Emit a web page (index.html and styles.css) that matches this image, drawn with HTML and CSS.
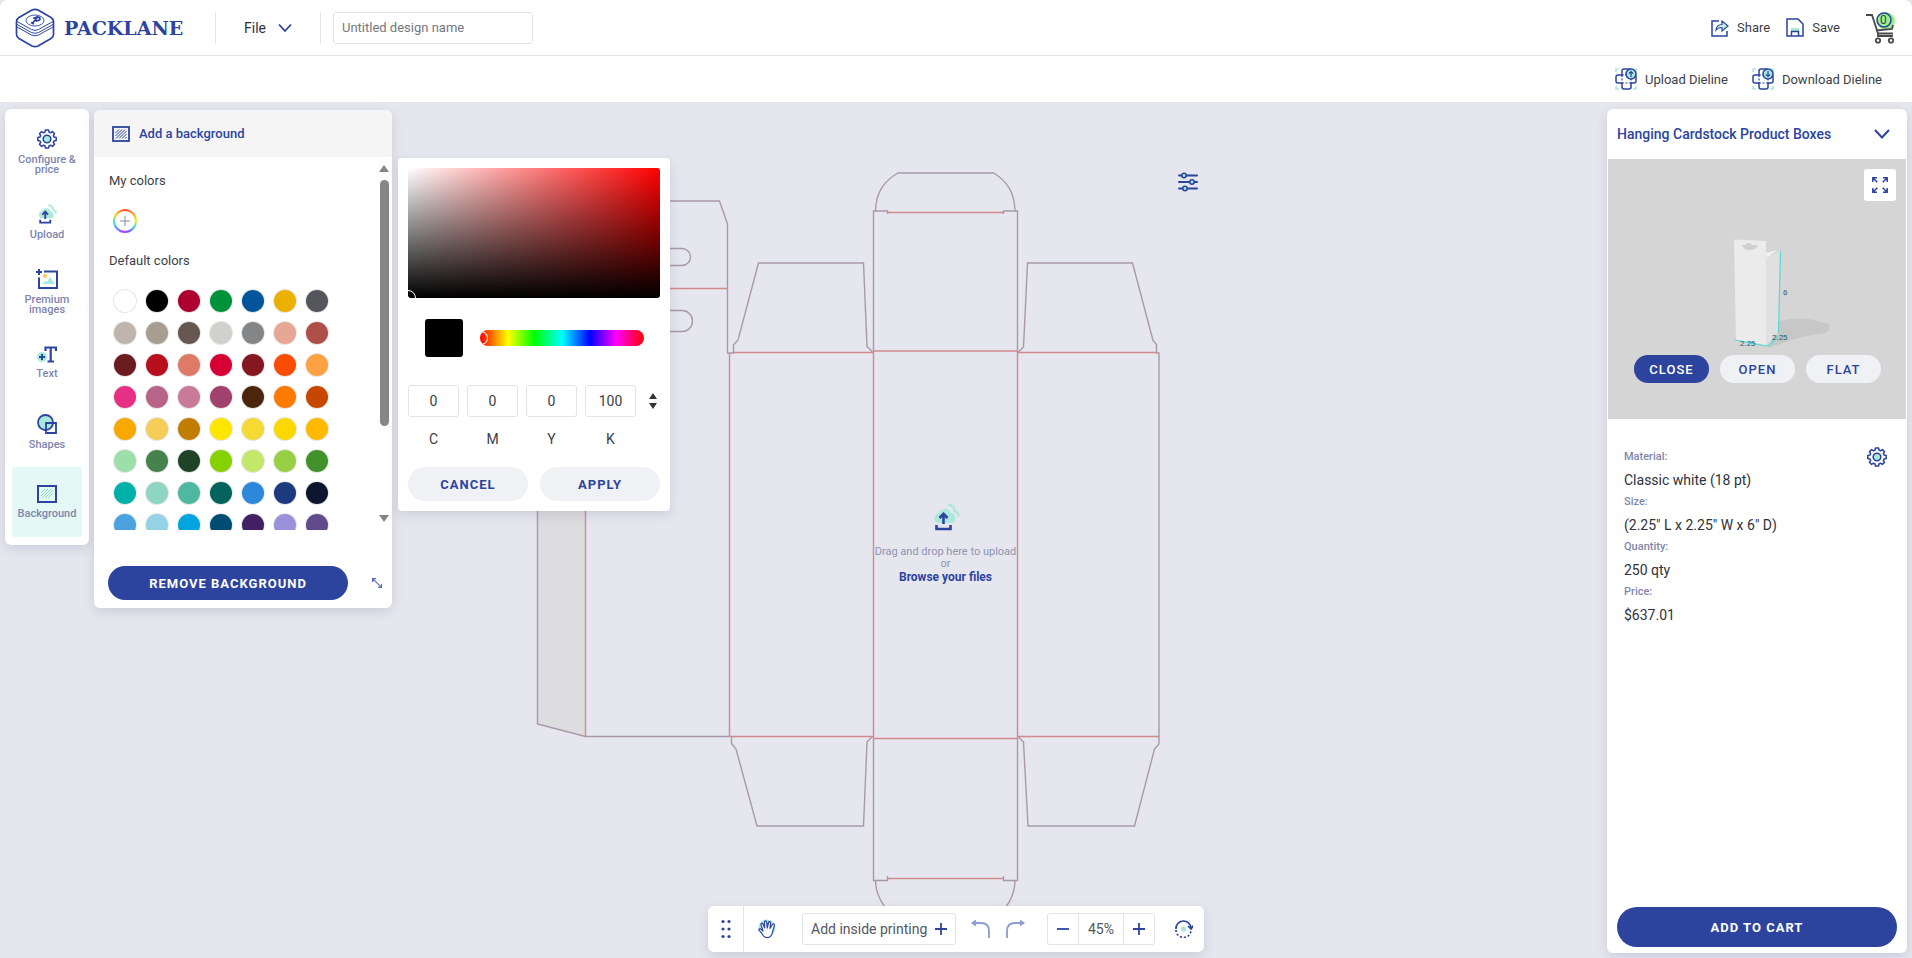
FILE: index.html
```html
<!DOCTYPE html>
<html lang="en">
<head>
<meta charset="utf-8">
<title>Packlane design editor</title>
<link rel="stylesheet" href="styles.css">
</head>
<body>
<svg class="defs" aria-hidden="true">
  <symbol id="gear" viewBox="0 0 20 20">
    <path d="M8.3 1h3.4l.5 2.4 1.6.7 2.1-1.3 2.3 2.3-1.3 2.1.7 1.6 2.4.5v3.4l-2.4.5-.7 1.6 1.3 2.1-2.3 2.3-2.1-1.3-1.6.7-.5 2.4H8.3l-.5-2.4-1.6-.7-2.1 1.3-2.3-2.3 1.3-2.1-.7-1.6L0 12.700V9.300l2.400-.5.7-1.600L1.800 5.100 4.100 2.800l2.100 1.300 1.600-.7z" transform="translate(.8 .1) scale(.92 .9)" fill="none" stroke="#2c449e" stroke-width="1.7" stroke-linejoin="round"/>
    <circle cx="10" cy="10" r="3.800" fill="#a9e8da" stroke="#2c449e" stroke-width="1.600"/>
  </symbol>
  <symbol id="cloud" viewBox="0 0 28 28">
    <path d="M6 20a5 5 0 0 1 .8-9.700A6.500 6.500 0 0 1 19 10a5.200 5.200 0 0 1 1 10z" fill="#a9e8da"/>
    <path d="M16 1.500c4.500.5 6.500 3 6.700 6.500 2.500.7 3.800 2.800 4 5.500" fill="none" stroke="#a9e8da" stroke-width="2.400"/>
    <path d="M11.500 21V12M7.500 15l4-4.200 4 4.200" fill="none" stroke="#2c449e" stroke-width="2.600"/>
    <path d="M4.500 22v4h14v-4" fill="none" stroke="#2c449e" stroke-width="2.600"/>
  </symbol>
  <symbol id="dieline-icon" viewBox="0 0 22 22">
    <path d="M1 4V1h3M18 1h3v3M21 18v3h-3M4 21H1v-3" fill="none" stroke="#8fe0cc" stroke-width="1.200"/>
    <path d="M7 7V3q0-2 2-2h5q2 0 2 2v4h3q2 0 2 2v4q0 2-2 2h-3v4q0 2-2 2H9q-2 0-2-2v-4H3q-2 0-2-2V9q0-2 2-2z" fill="none" stroke="#2c449e" stroke-width="1.500"/>
    <path d="M7 7v8M16 7v8M7 15h9M7 7h4" stroke="#2c449e" stroke-width="1.200" stroke-dasharray="2 1.500"/>
    <circle cx="16" cy="6" r="5" fill="#a9e8da" stroke="#2c449e" stroke-width="1.600"/>
  </symbol>
</svg>

<header class="topbar">
  <a class="logo" href="#" aria-label="Packlane">
    <svg width="40" height="40" viewBox="0 0 40 40" fill="none" stroke="#2c449e" stroke-linejoin="round">
      <path d="M17 2q3-1.400 6 0l13 7.500q2.500 1.500 2.500 4v13q0 2.500-2.500 4L23 38q-3 1.400-6 0L4 30.500q-2.500-1.500-2.500-4v-13q0-2.500 2.500-4z" stroke-width="1.700"/>
      <path d="M2 13.500l14.500 8q3.500 1.700 7 0l14.500-8M2 16.500l14.500 8q3.500 1.700 7 0l14.500-8M2 19l14.500 8q3.500 1.700 7 0l14.500-8" stroke-width="1"/>
      <ellipse cx="20" cy="12.500" rx="9" ry="5.500" stroke-width=".9"/>
      <path d="M16 14.500l3 1.500M17.500 15l4.500-5M18 10.500l4-1.500c4 0 4.500 3.500-1.500 4" stroke-width="1.800"/>
    </svg>
    <span class="logo-text">PACKLANE</span>
  </a>
  <span class="rule"></span>
  <button class="file" type="button">File
    <svg width="14" height="10" viewBox="0 0 14 10" fill="none" stroke="#2c449e" stroke-width="1.800"><path d="M1 1.500l6 6.500 6-6.500"/></svg>
  </button>
  <span class="rule"></span>
  <input class="design-name" type="text" placeholder="Untitled design name" aria-label="Design name">
  <nav class="top-actions">
    <button type="button">
      <svg width="18" height="18" viewBox="0 0 18 18" fill="none" stroke="#2c449e" stroke-width="1.500"><path d="M8 2H1v15h15v-5"/><path d="M5 11c.5-4 3-5.500 6-5.500V2l6 5-6 5V8.500c-2.500 0-4.500.5-6 2.500z" fill="#c9f1e8" stroke-width="1.200"/></svg>
      Share</button>
    <button type="button">
      <svg width="18" height="19" viewBox="0 0 18 19" fill="none" stroke="#2c449e" stroke-width="1.500"><path d="M5 10h8v4H5z" fill="#a9e8da" stroke="none"/><path d="M1 1h11l5 5v12H1z"/><path d="M5.500 18v-4.500h7V18"/></svg>
      Save</button>
    <button class="cart" type="button" aria-label="Cart, 0 items">
      <svg width="30" height="34" viewBox="0 0 30 34" fill="none" stroke="#4a4a4a" stroke-width="1.800"><circle cx="20" cy="10" r="9" fill="#9af08c" stroke="none"/><path d="M0 4h6l6 18.500h15M10 19.500l16-1.500 1-4" /><path d="M12 22.500v2.500h15"/><circle cx="12" cy="29.500" r="2.200"/><circle cx="25" cy="29.500" r="2.200"/><circle cx="18" cy="9" r="7" stroke="#2c449e" stroke-width="1.600"/></svg>
      <span class="cart-count">0</span></button>
  </nav>
</header>

<nav class="subbar">
  <button type="button"><span class="svg-wrap"><svg width="22" height="22"><use href="#dieline-icon"/><path d="M16 9V4M14 5.500l2-2 2 2" fill="none" stroke="#2c449e" stroke-width="1.200"/></svg></span>Upload Dieline</button>
  <button type="button"><span class="svg-wrap"><svg width="22" height="22"><use href="#dieline-icon"/><path d="M16 3v5M14 6.500l2 2 2-2" fill="none" stroke="#2c449e" stroke-width="1.200"/></svg></span>Download Dieline</button>
</nav>

<main class="workspace">
  <svg class="dieline" width="640" height="790" viewBox="530 165 640 790" fill="none" stroke-width="1.400" aria-hidden="true">
    <path d="M537.500 366L585.500 353V736.500L537.500 724z" fill="#dddddf"/>
    <g stroke="#a899a9">
      <path d="M585.500 353L537.500 366V724L585.500 736.500H729.500"/>
      <path d="M593 201H719.500L727.500 224V353"/>
      <path d="M620 248.500H682a8.500 8.500 0 0 1 0 17H620M620 310.500H682a10.500 10.500 0 0 1 0 21H620"/>
      <path d="M727 353H733.500V345L738 340 758.500 263H863.500L867 346.500 873.500 353"/>
      <path d="M1017.500 353L1023.500 347 1027.500 263H1132.500L1153 340.500 1156.500 344.500V353H1159V744L1154.500 749 1134.500 826H1028L1023.500 742 1018 736.500"/>
      <path d="M731.500 736.500V743.500L736 749 757 826H863.500L867 742 872.500 736.500"/>
      <path d="M873.500 351V211H887.500V214M1003.500 214V211H1017.500V351"/>
      <path d="M875.500 211C876 192 884 181 898 173H993.500C1007 181 1014.500 192 1015 211"/>
      <path d="M873.500 738V880.500H887.500V876M1003.500 876V880.500H1017.500V738"/>
      <path d="M875.500 881C876 896 884 910 898 918H993.500C1007 910 1014.500 896 1015 881"/>
    </g>
    <g stroke="#d08a8e">
      <path d="M585.500 353V736.500M593 288.500H727.500M729.500 353V736.500M733 352.500H873M873.500 351V738M1017.500 351V738M873 351H1018M1018 352.500H1157M887 212.500H1003M729.500 736.500H873M873 738.500H1018M1018 736.500H1159M887 878.500H1003"/>
    </g>
  </svg>

  <label class="dropzone">
    <svg width="28" height="28"><use href="#cloud"/></svg>
    <span>Drag and drop here to upload</span>
    <span>or</span>
    <strong>Browse your files</strong>
    <input type="file" class="visually-hidden">
  </label>

  <button class="view-options" type="button" aria-label="View options">
    <svg width="20" height="20" viewBox="0 0 20 20" stroke="#2c449e" stroke-width="2" stroke-linecap="round"><path d="M1 3.500h18M1 10h18M1 16.500h18"/><g fill="#a9e8da" stroke-width="1.600"><circle cx="6" cy="3.500" r="2.200"/><circle cx="14" cy="10" r="2.200"/><circle cx="7" cy="16.500" r="2.200"/></g></svg>
  </button>

  <nav class="rail card">
    <button type="button"><svg width="20" height="20"><use href="#gear"/></svg>Configure &amp; price</button>
    <button type="button"><svg width="20" height="20"><use href="#cloud"/></svg>Upload</button>
    <button type="button"><svg width="22" height="20" viewBox="0 0 22 20" fill="none" stroke="#2c449e" stroke-width="2"><path d="M0 3h6M3 0v6M8 2.500h13V19H3V8.500"/><path d="M6 15l3-3 2 1 3-5 5 7z" fill="#a9e8da" stroke="none"/><circle cx="9" cy="7" r="2" fill="#ffc94d" stroke="none"/></svg>Premium images</button>
    <button type="button"><svg width="20" height="17" viewBox="0 0 20 17" fill="none" stroke="#2c449e"><circle cx="5" cy="11" r="5" fill="#a9e8da" stroke="none"/><path d="M2 11h6M5 8v6" stroke-width="2"/><path d="M8.500 5V1.500h10.500V5M13.700 1.500V15M10.500 15.500h6.500" stroke-width="2.200"/></svg>Text</button>
    <button type="button"><svg width="20" height="20" viewBox="0 0 20 20" fill="none" stroke="#2c449e" stroke-width="1.800"><circle cx="8.500" cy="8.500" r="7.500" fill="#a9e8da"/><path d="M9 9h10v10H9z"/></svg>Shapes</button>
    <button type="button" class="active"><svg width="20" height="18" viewBox="0 0 20 18" fill="none" stroke="#2c449e" stroke-width="2"><path d="M4 8l4-4M4 11l7-7M5 13l9-9M8 13l8-8M11 13l5-5" stroke="#8adcc8" stroke-width="1"/><rect x="1" y="1" width="18" height="16"/></svg>Background</button>
  </nav>

  <section class="bg-panel card">
    <h2><svg width="18" height="16" viewBox="0 0 18 16" fill="none" stroke="#2c449e"><rect x="1" y="1" width="16" height="14" stroke-width="1.800"/><path d="M3.500 7l3.500-3.500M3.500 10l6.500-6.500M4 12.500l9-9M7 12.500l7.500-7.500M10 12.500l4.500-4.500M13 12.500l1.500-1.500" stroke-width="1"/></svg>Add a background</h2>
    <div class="scroll-area">
      <div class="palette">
        <h3>My colors</h3>
        <button type="button" class="add-color" aria-label="Add color"><span>
          <svg width="10" height="10" viewBox="0 0 10 10" stroke="#8a8aa0" stroke-width="1"><path d="M5 0v10M0 5h10"/></svg></span></button>
        <h3>Default colors</h3>
        <div class="swatches" id="swatches"></div>
      </div>
      <div class="scrollbar" aria-hidden="true">
        <svg width="10" height="7"><path d="M5 0l5 7H0z" fill="#858585"/></svg>
        <span class="thumb"></span>
        <svg width="10" height="7"><path d="M0 0h10L5 7z" fill="#858585"/></svg>
      </div>
    </div>
    <footer>
      <button type="button" class="primary">REMOVE BACKGROUND</button>
      <svg width="10" height="10" viewBox="0 0 10 10" fill="none" stroke="#5a6fb5" stroke-width="1.200"><path d="M.6 4V.6H4M.6.6l8.800 8.800M9.400 6v3.400H6"/></svg>
    </footer>
  </section>

  <section class="picker card">
    <div class="shade"><span class="shade-knob"></span></div>
    <div class="hue-row">
      <span class="current"></span>
      <input class="hue" type="range" min="0" max="360" value="0" aria-label="Hue">
    </div>
    <div class="cmyk">
      <label><input type="text" value="0"><span>C</span></label>
      <label><input type="text" value="0"><span>M</span></label>
      <label><input type="text" value="0"><span>Y</span></label>
      <label><input type="text" value="100"><span>K</span></label>
      <button type="button" aria-label="Change color model"><svg width="8" height="16" fill="#333"><path d="M4 0l4 6H0zM0 10h8l-4 6z"/></svg></button>
    </div>
    <div class="picker-actions">
      <button type="button">CANCEL</button>
      <button type="button">APPLY</button>
    </div>
  </section>

  <aside class="product card">
    <header>
      <h2>Hanging Cardstock Product Boxes</h2>
      <button type="button" aria-label="Collapse"><svg width="16" height="10" viewBox="0 0 16 10" fill="none" stroke="#2c449e" stroke-width="2"><path d="M1 1l7 7.500L15 1"/></svg></button>
    </header>
    <div class="preview">
      <svg class="box" viewBox="0 0 298 260" width="298" height="260" aria-hidden="true">
        <path d="M171 162q18-4 36-1 8 3 14 4 1 8-4 9-24 3-42 10l-15 5z" fill="#c7c7c7"/>
        <path d="M158 99l14-7-2 82-12 12z" fill="#e0e0e0"/>
        <path d="M158 94l11-3-10 8z" fill="#f5f1ec"/>
        <path d="M126 80.500l32 1.500v104l-30-5z" fill="#ebebeb"/>
        <path d="M134 86q4 0 6-2 3 0 4 2h6q-1 5-8 5-7 0-8-5z" fill="#d0d0d0"/>
        <path d="M172.500 92.500l-2 81M170 177l-8 9-4 1-31-6" fill="none" stroke="#53dcd8" stroke-width="1.200"/>
        <g font-family="Liberation Sans, sans-serif" font-size="8" fill="#17616c"><text x="175" y="136">6</text><text x="164" y="181">2.25</text><text x="132" y="187">2.25</text></g>
      </svg>
      <button class="fullscreen" type="button" aria-label="Full screen"><svg width="16" height="16" viewBox="0 0 16 16" fill="none" stroke="#2c449e" stroke-width="1.500"><path d="M.8 5V.8H5M.8.8l4.500 4.500M11 .8h4.200V5M15.200.8l-4.500 4.500M.8 11v4.200H5M.8 15.200l4.500-4.500M11 15.200h4.200V11M15.200 15.200l-4.500-4.500"/></svg></button>
      <div class="modes">
        <button type="button" class="on">CLOSE</button>
        <button type="button">OPEN</button>
        <button type="button">FLAT</button>
      </div>
    </div>
    <div class="specs">
      <dl>
        <dt>Material:</dt><dd>Classic white (18 pt)</dd>
        <dt>Size:</dt><dd>(2.25" L x 2.25" W x 6" D)</dd>
        <dt>Quantity:</dt><dd>250 qty</dd>
        <dt>Price:</dt><dd>$637.01</dd>
      </dl>
      <button type="button" aria-label="Configure"><svg width="20" height="20"><use href="#gear"/></svg></button>
    </div>
    <button type="button" class="primary add">ADD TO CART</button>
  </aside>

  <div class="toolbar card">
    <button class="grip" type="button" aria-label="Move toolbar"><svg width="10" height="20" viewBox="0 0 10 20" fill="#2c449e"><circle cx="2" cy="2.500" r="1.600"/><circle cx="8" cy="2.500" r="1.600"/><circle cx="2" cy="10" r="1.600"/><circle cx="8" cy="10" r="1.600"/><circle cx="2" cy="17.500" r="1.600"/><circle cx="8" cy="17.500" r="1.600"/></svg></button>
    <button class="pan" type="button" aria-label="Pan"><svg width="18" height="20" viewBox="0 0 18 20" fill="none" stroke="#2c449e" stroke-width="1.200" stroke-linejoin="round" stroke-linecap="round"><circle cx="9" cy="9" r="8.500" fill="#a9e8da" stroke="none"/><path d="M5.500 17C4 14 2 12.500 1 11.200c-.5-1 .8-2 1.800-1.100L5 12 3 5.500c-.3-1.300 1.500-1.800 2-.5L6.700 9 6.500 3c0-1.400 1.900-1.500 2.100 0L9.300 9l1.200-5.500c.4-1.300 2.100-1 2 .4L12 9.500l2.500-4c.7-1.100 2.200-.4 1.900.8-.7 2.700-1.400 4.500-1.900 6.700-.5 2.500-1.500 5.500-5 5.700-1.700 0-3-.4-4-1.700z" fill="#fff"/></svg></button>
    <button class="inside" type="button">Add inside printing <svg width="12" height="12" viewBox="0 0 12 12" stroke="#2c449e" stroke-width="1.800"><path d="M6 0v12M0 6h12"/></svg></button>
    <button class="undo" type="button" aria-label="Undo"><svg width="19" height="18" viewBox="0 0 19 18" fill="none" stroke="#8c9bd0" stroke-width="1.800"><path d="M1.500 3H10q8 0 8 8v7M5 .5L1.500 3 5 5.500"/></svg></button>
    <button class="redo" type="button" aria-label="Redo"><svg width="19" height="18" viewBox="0 0 19 18" fill="none" stroke="#8c9bd0" stroke-width="1.800"><path d="M17.500 3H9q-8 0-8 8v7M14 .5L17.500 3 14 5.500"/></svg></button>
    <div class="zoom">
      <button type="button" aria-label="Zoom out"><svg width="12" height="12" viewBox="0 0 12 12" stroke="#2c449e" stroke-width="1.800"><path d="M0 6h12"/></svg></button>
      <output>45%</output>
      <button type="button" aria-label="Zoom in"><svg width="12" height="12" viewBox="0 0 12 12" stroke="#2c449e" stroke-width="1.800"><path d="M6 0v12M0 6h12"/></svg></button>
    </div>
    <button class="rotate" type="button" aria-label="Rotate"><svg width="18" height="18" viewBox="0 0 18 18" fill="none" stroke="#2c449e" stroke-width="1.700"><circle cx="8.500" cy="9" r="2.600" fill="#a9e8da" stroke="none"/><path d="M1 9a7.500 7.500 0 0 1 15-1M13 6l3 3 2.500-3.500"/><path d="M1 10a7.500 7.500 0 0 0 15 0" stroke-dasharray="2 2"/></svg></button>
  </div>
</main>
<script src="swatches.js"></script>
</body>
</html>
```
FILE: styles.css
```css
* { box-sizing: border-box; }
html, body { height: 100%; }
body {
  margin: 0;
  display: flex;
  flex-direction: column;
  overflow: hidden;
  font-family: Roboto, "Liberation Sans", sans-serif;
  font-size: 14px;
  color: #3c3f46;
  background: #e6e6ee;
}
button, input, output { font: inherit; color: inherit; }
button { border: 0; padding: 0; background: none; cursor: pointer; }
h2, h3, dl, dd { margin: 0; }
svg { display: block; flex: none; }
.defs { position: absolute; width: 0; height: 0; }
.visually-hidden { position: absolute; width: 1px; height: 1px; opacity: 0; }
.card { background: #fff; border-radius: 6px; box-shadow: 0 4px 12px rgba(60, 60, 110, .14); }

.topbar {
  flex: none;
  display: flex;
  align-items: center;
  height: 56px;
  padding: 0 16px 0 15px;
  background: #fff;
  border-bottom: 1px solid #e3e4ea;
  border-radius: 8px 8px 0 0;
}
.logo { display: flex; align-items: center; gap: 9px; text-decoration: none; color: #2c449e; width: 200px; }
.logo-text { font: bold 19px "DejaVu Serif", serif; }
.rule { width: 1px; height: 32px; background: #e3e4ea; }
.file { display: flex; align-items: center; gap: 12px; padding: 0 28px; color: #2e3140; }
.design-name { width: 200px; height: 32px; margin-left: 12px; padding: 0 8px; border: 1px solid #e3e4ea; border-radius: 3px; font-size: 13px; }
.design-name::placeholder { color: #74767c; opacity: 1; }
.top-actions { display: flex; align-items: center; gap: 16px; margin-left: auto; }
.top-actions button { display: flex; align-items: center; gap: 8px; font-size: 13px; }
.top-actions .cart { position: relative; margin-left: 10px; }
.cart-count { position: absolute; left: 14px; top: 2px; font-size: 12px; line-height: 14px; }

.subbar {
  flex: none;
  display: flex;
  justify-content: flex-end;
  align-items: center;
  gap: 24px;
  height: 46px;
  padding-right: 30px;
  background: #fff;
  font-size: 13px;
}
.subbar button { display: flex; align-items: center; gap: 8px; }

.workspace { position: relative; flex: 1; min-height: 0; display: flex; align-items: flex-start; padding: 7px 5px 5px; }
.workspace > .card { position: relative; }
.dieline { position: absolute; left: 530px; top: 63px; }
.dropzone {
  position: absolute; left: 874px; top: 401px; width: 143px;
  display: flex; flex-direction: column; align-items: center;
  font-size: 11px; line-height: 12px; color: #8f94b2; white-space: nowrap;
}
.dropzone svg { margin-bottom: 15px; }
.dropzone strong { font-size: 12px; color: #2c449e; line-height: 14px; }
.view-options { position: absolute; left: 1178px; top: 70px; }

.rail { display: flex; flex-direction: column; width: 84px; padding: 8px 7px; }
.rail button {
  display: flex; flex-direction: column; align-items: center; justify-content: center; gap: 6px;
  height: 70px; border-radius: 3px;
  font-size: 11px; line-height: 10px; font-weight: 500; color: #7d86ad;
}
.rail .active { background: #e4f8f5; }

.bg-panel { margin: 1px 0 0 5px; width: 298px; overflow: hidden; }
.bg-panel h2 { display: flex; align-items: center; gap: 9px; height: 47px; padding: 0 18px; background: #f5f5f5; font-size: 13px; font-weight: 500; color: #2c449e; }
.scroll-area { display: flex; justify-content: space-between; height: 373px; padding: 0 3px 0 15px; }
.palette { overflow: hidden; padding-top: 16px; }
.palette h3 { font-size: 13px; line-height: 16px; font-weight: 400; }
.add-color { width: 24px; height: 24px; margin: 20px 0 20px 4px; padding: 2px; border-radius: 50%; background: conic-gradient(#ff4b2e, #ffb61e 60deg, #e8f52e 90deg, #3ee0c8 120deg, #7a5cff 160deg, #b53cf0 190deg, #4ab0ff 240deg, #3fe8d0 265deg, #ffd51e 300deg, #ff4b2e); display: block; }
.add-color span { display: grid; place-items: center; width: 20px; height: 20px; border-radius: 50%; background: #fff; }
.swatches { display: grid; grid-template-columns: repeat(7, 22px); gap: 10px; padding: 21px 5px; }
.swatches button { width: 22px; height: 22px; border-radius: 50%; box-shadow: 0 0 0 1px rgba(0, 0, 0, .1); }
.scrollbar { display: flex; flex-direction: column; align-items: center; width: 10px; padding: 8px 0; }
.thumb { width: 9px; height: 246px; margin: 8px 0 auto; border-radius: 5px; background: #868686; }
.bg-panel footer { display: flex; align-items: center; justify-content: space-between; padding: 36px 10px 8px 14px; }
.primary { border-radius: 17px; height: 34px; background: #2c449e; color: #fff; font-size: 13px; font-weight: 700; letter-spacing: 1px; }
.bg-panel .primary { width: 240px; }

.picker { margin: 49px 0 0 6px; width: 272px; padding: 10px; border-radius: 4px; }
.shade {
  position: relative; height: 130px; border-radius: 3px; overflow: hidden;
  background: linear-gradient(to top, #000, transparent), linear-gradient(to right, #fff, #f00);
}
.shade-knob { position: absolute; left: -8px; bottom: -8px; width: 16px; height: 16px; border: 1px solid #fff; border-radius: 50%; }
.hue-row { display: flex; align-items: center; gap: 17px; padding: 21px 16px 0 17px; }
.current { flex: none; width: 38px; height: 38px; border-radius: 3px; background: #000; }
.hue {
  flex: 1; min-width: 0; height: 16px; margin: 0; appearance: none; border-radius: 8px;
  background: linear-gradient(to right, #f00, #ff0 17%, #0f0 33%, #0ff 50%, #00f 67%, #f0f 83%, #f00);
}
.hue::-webkit-slider-thumb { appearance: none; width: 8px; height: 14px; border: 1px solid #fff; border-left: 0; border-radius: 0 7px 7px 0; background: transparent; }
.cmyk { display: flex; gap: 8px; padding-top: 28px; }
.cmyk label { display: flex; flex-direction: column; align-items: center; gap: 14px; line-height: 16px; }
.cmyk input { width: 51px; height: 32px; padding: 0; border: 1px solid #e3e4ea; border-radius: 3px; text-align: center; }
.cmyk button { height: 32px; margin-left: 5px; }
.picker-actions { display: flex; gap: 12px; padding-top: 20px; }
.picker-actions button { flex: 1; height: 34px; border-radius: 17px; background: #f0f1f5; color: #2c449e; font-size: 13px; font-weight: 700; letter-spacing: 1px; }

.product { display: flex; flex-direction: column; align-self: stretch; width: 300px; margin-left: auto; }
.product header { display: flex; align-items: center; justify-content: space-between; height: 50px; padding: 0 17px 0 10px; }
.product h2 { font-size: 14px; font-weight: 500; color: #2c449e; }
.preview { position: relative; height: 260px; margin: 0 1px; background: #d5d5d5; }
.fullscreen { position: absolute; right: 10px; top: 10px; display: grid; place-items: center; width: 32px; height: 32px; border-radius: 3px; background: #fff; }
.modes { position: absolute; left: 26px; right: 25px; bottom: 36px; display: flex; gap: 11px; }
.modes button { flex: 1; height: 28px; border-radius: 14px; background: #f0f1f5; color: #2c449e; font-size: 13px; font-weight: 500; letter-spacing: 1px; }
.modes .on { background: #2c449e; color: #fff; }
.specs { display: flex; justify-content: space-between; align-items: flex-start; padding: 28px 20px 0 17px; }
.specs dl { line-height: 20px; color: #2f3238; }
.specs dt { font-size: 11px; font-weight: 500; color: #7f87a8; }
.specs dd { margin-bottom: 1px; padding-top: 2px; line-height: 22px; }
.product .add { height: 40px; border-radius: 20px; margin: auto 10px 6px; }

.workspace > .toolbar {
  position: absolute; left: 50%; bottom: 6px; transform: translateX(-50%);
  display: flex; align-items: center; height: 46px; width: 496px;
}
.grip { display: grid; place-items: center; width: 36px; height: 46px; border-right: 1px solid #e3e4ea; }
.pan { margin-left: 14px; }
.inside { display: flex; align-items: center; gap: 8px; height: 32px; margin-left: 26px; padding: 0 8px; border: 1px solid #e3e4ea; border-radius: 3px; white-space: nowrap; color: #54565c; }
.undo { margin-left: auto; }
.redo { margin: 0 22px 0 16px; }
.zoom { display: flex; height: 32px; border: 1px solid #e3e4ea; border-radius: 3px; color: #54565c; }
.zoom button { display: grid; place-items: center; width: 30px; }
.zoom output { width: 46px; line-height: 30px; text-align: center; border: solid #e3e4ea; border-width: 0 1px; }
.rotate { margin: 0 11px 0 20px; }
```
FILE: swatches.js
```js
const colors = [
  '#ffffff', '#000000', '#ae0030', '#00923a', '#00559b', '#ecb000', '#55565b',
  '#c0b5ac', '#a79d91', '#665750', '#d0d0cc', '#848587', '#e6a797', '#ae5049',
  '#6a1c20', '#b80f1f', '#df7a66', '#d70035', '#841720', '#fb4c05', '#fda142',
  '#e62f85', '#b86489', '#c77b98', '#a1416d', '#4b260c', '#ff7a00', '#c74700',
  '#f9a800', '#f4ce59', '#c17d00', '#ffe600', '#f5da33', '#fbd900', '#ffba00',
  '#9ddfab', '#46834c', '#1e4425', '#86d100', '#c3e869', '#98d045', '#42922b',
  '#00b1a7', '#8fd5c4', '#50b8a1', '#00645d', '#2d87db', '#1e3a7e', '#0c162e',
  '#4aa3df', '#93d3e5', '#00a4de', '#004d73', '#412063', '#9b90da', '#614b8b'
];
const grid = document.getElementById('swatches');
for (const color of colors) {
  const swatch = document.createElement('button');
  swatch.type = 'button';
  swatch.style.background = color;
  swatch.setAttribute('aria-label', color);
  grid.append(swatch);
}
```
